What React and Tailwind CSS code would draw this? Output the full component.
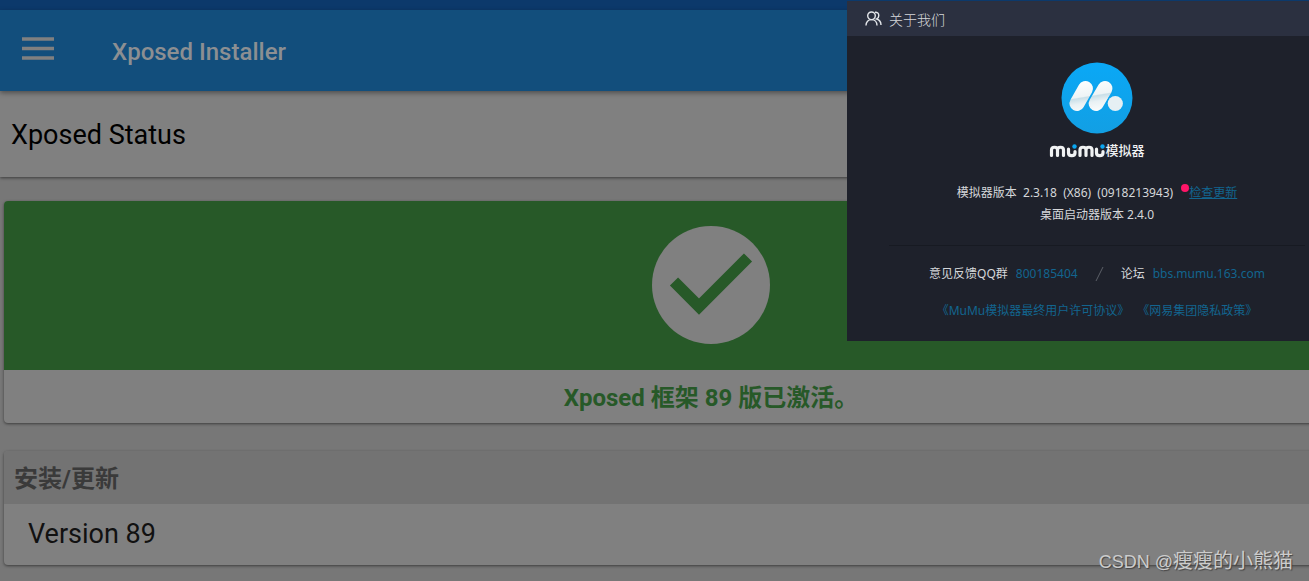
import { useState } from 'react';

const dialogLink = 'text-[#12658f] hover:underline';

function MenuIcon() {
  return (
    <svg width="32" height="24" viewBox="0 0 32 24" aria-hidden="true">
      <path d="M0 2h32M0 11.500h32M0 21h32" stroke="#808080" strokeWidth="3.500" />
    </svg>
  );
}

function CheckCircle() {
  return (
    <svg width="118" height="118" viewBox="0 0 118 118" aria-hidden="true">
      <circle cx="59" cy="59" r="59" fill="#808080" />
      <path d="M22 55.500L47 80.500L96 31.500" fill="none" stroke="#275928" strokeWidth="11.500" />
    </svg>
  );
}

function PeopleIcon() {
  return (
    <svg width="17" height="16" viewBox="0 0 17 16" fill="none" stroke="#e3e6ea" strokeWidth="1.400" aria-hidden="true">
      <circle cx="6.500" cy="4.800" r="3.800" />
      <path d="M1 14.500C1 11 3.200 8.600 6.500 8.600S12 11 12 14.500" />
      <path d="M10 1.200C12.500 1 13.800 2.700 13.800 4.500S13 7.500 11.700 8C14.300 8.800 16 11 16 14" />
    </svg>
  );
}

function MumuLogo() {
  return (
    <svg width="72" height="72" viewBox="0 0 72 72" aria-hidden="true">
      <defs>
        <linearGradient id="sky" x1="0" y1="0" x2="0" y2="1">
          <stop offset="0" stopColor="#0aa8f6" />
          <stop offset="1" stopColor="#129fe4" />
        </linearGradient>
        <linearGradient id="shine" gradientUnits="userSpaceOnUse" x1="30" y1="18" x2="35" y2="49">
          <stop offset="0" stopColor="#fdfefe" />
          <stop offset="0.480" stopColor="#eef4f6" />
          <stop offset="0.520" stopColor="#c9dfe8" />
          <stop offset="0.700" stopColor="#e9f1f4" />
          <stop offset="1" stopColor="#fafcfc" />
        </linearGradient>
      </defs>
      <circle cx="36" cy="36" r="35.500" fill="url(#sky)" />
      <g fill="none" strokeLinecap="round">
        <path d="M16 41.500L24.500 26.500" stroke="url(#shine)" strokeWidth="15" />
        <path d="M35.200 41.500L44 26.500" stroke="#0ba3ed" strokeWidth="17" />
        <path d="M35.200 41.500L44 26.500" stroke="url(#shine)" strokeWidth="15" />
      </g>
      <circle cx="54.300" cy="41.500" r="8.700" fill="#0ba3ed" />
      <circle cx="54.300" cy="41.500" r="7.600" fill="#e6eff3" />
    </svg>
  );
}

// The rounded "mumu" wordmark, a blue dot sits on each u
function MumuWordmark() {
  return (
    <svg width="56" height="14" viewBox="0 0 56 14" fill="none" aria-hidden="true">
      <g stroke="#f0f2f3" strokeWidth="3.200" strokeLinecap="round" strokeLinejoin="round">
        <path d="M2.500 11.500V6C2.500 2.300 8.500 2.300 8.500 6V11.500M8.500 6C8.500 2.300 14.500 2.300 14.500 6V11.500" />
        <path d="M19.500 5V9C19.500 12.500 26 12.500 26 9V7.500" />
        <path d="M31 11.500V6C31 2.300 37 2.300 37 6V11.500M37 6C37 2.300 43 2.300 43 6V11.500" />
        <path d="M47.500 5V9C47.500 12.500 54 12.500 54 9V7.500" />
      </g>
      <circle cx="25.500" cy="2.500" r="2.200" fill="#0ba6f0" />
      <circle cx="53.500" cy="2.500" r="2.200" fill="#0ba6f0" />
    </svg>
  );
}

function AboutDialog() {
  return (
    <section
      aria-label="关于我们"
      className="absolute top-px -right-[38px] w-[500px] h-[340px] bg-[#1e212b] text-xs text-[#d5d7da] font-['Noto_Sans','Noto_Sans_CJK_SC',sans-serif]"
    >
      <header className="flex items-center gap-[7px] h-[35px] px-[18px] bg-[#2b3040]">
        <PeopleIcon />
        <h2 className="pt-0.5 text-sm font-light">关于我们</h2>
      </header>

      <div className="flex flex-col items-center pt-[26px]">
        <MumuLogo />
        <div className="flex items-center mt-[7px] h-5">
          <MumuWordmark />
          <span className="text-[13px] font-medium text-[#f0f2f3]">模拟器</span>
        </div>
      </div>

      <div className="mt-[21px] text-center leading-[22px]">
        <p>
          模拟器版本&nbsp; 2.3.18&nbsp; (X86)&nbsp; (0918213943)
          <a href="#update" className="relative ml-4 text-[#12658f] underline">
            <span className="absolute -left-2 top-0 size-2 rounded-full bg-[#ff1568]" />
            检查更新
          </a>
        </p>
        <p>桌面启动器版本 2.4.0</p>
      </div>

      <hr className="mx-[42px] mt-[19px] border-[#171a22]" />

      <div className="flex justify-center items-center mt-[17px] leading-[22px]">
        <span>意见反馈QQ群</span>
        <a href="#qq" className={`ml-2 ${dialogLink}`}>800185404</a>
        <svg className="mx-[17px]" width="9" height="14" viewBox="0 0 9 14" aria-hidden="true">
          <path d="M1 14L8 0" stroke="#5c6068" />
        </svg>
        <span>论坛</span>
        <a href="#bbs" className={`ml-2 ${dialogLink}`}>bbs.mumu.163.com</a>
      </div>

      <div className="flex justify-center gap-2 mt-[15px] leading-[22px]">
        <a href="#license" className={dialogLink}>《MuMu模拟器最终用户许可协议》</a>
        <a href="#privacy" className={dialogLink}>《网易集团隐私政策》</a>
      </div>
    </section>
  );
}

export default function App() {
  const [menuOpen, setMenuOpen] = useState(false);

  return (
    <div className="relative min-h-screen overflow-hidden bg-[#777777] font-[Roboto,'Noto_Sans_CJK_SC',sans-serif]">
      {/* Status bar + toolbar */}
      <div className="h-[10px] bg-[#0c396b]" />
      <header className="relative flex items-center h-[81px] px-[22px] bg-[#124e7c] shadow-[0_2px_5px_rgba(0,0,0,0.4)]">
        <button className="pb-1" aria-label="Menu" aria-expanded={menuOpen} onClick={() => setMenuOpen(!menuOpen)}>
          <MenuIcon />
        </button>
        <h1 className="ml-[58px] pt-0.5 text-2xl font-medium text-[#8c8f92]">Xposed Installer</h1>
      </header>

      <div className="flex items-center h-[86px] px-[11px] bg-[#808080] shadow-[0_1px_3px_rgba(0,0,0,0.5)]">
        <h2 className="pt-0.5 text-[27px] text-black">Xposed Status</h2>
      </div>

      {/* Cards run past the right edge of the window */}
      <main className="flex flex-col gap-7 pt-6 pl-1 -mr-[109px]">
        <section className="rounded bg-[#808080] shadow-[0_1px_3px_rgba(0,0,0,0.5)]">
          <div className="flex justify-center items-center h-[169px] pb-0.5 rounded-t bg-[#275928]">
            <CheckCircle />
          </div>
          <p className="h-[53px] pt-0.5 text-center text-2xl leading-[53px] font-bold text-[#275928]">
            Xposed 框架 89 版已激活。
          </p>
        </section>

        <section className="rounded bg-[#808080] shadow-[0_1px_3px_rgba(0,0,0,0.5)]">
          <h3 className="h-[53px] pt-0.5 px-[10px] rounded-t bg-[#737373] text-2xl leading-[53px] font-bold text-[#3a3a3a]">
            安装/更新
          </h3>
          <p className="h-[61px] px-6 text-[27px] leading-[61px] text-[#111111]">Version 89</p>
        </section>
      </main>

      <AboutDialog />

      <p className="absolute right-4 bottom-1 text-xl leading-8 text-[#cccccc] [text-shadow:1px_1px_1px_#444444] font-['Liberation_Sans','Noto_Sans_CJK_SC',sans-serif]">
        <span className="text-lg">CSDN @</span>瘦瘦的小熊猫
      </p>
    </div>
  );
}
